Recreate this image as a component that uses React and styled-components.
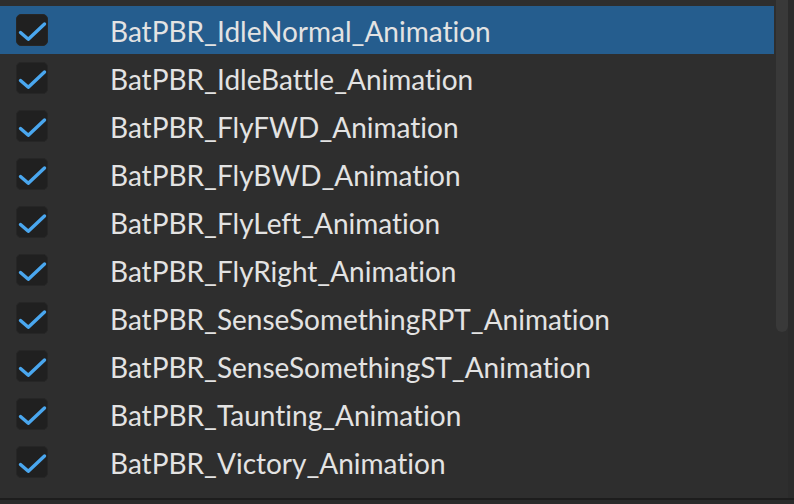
import React from "react";
import styled, { createGlobalStyle } from "styled-components";

const GlobalStyle = createGlobalStyle`
  html, body { margin: 0; padding: 0; background: #2e2e2e; }
  #root { height: 504px; }
`;

const Panel = styled.div`
  width: 794px;
  height: 504px;
  display: flex;
  flex-direction: column;
  background: #2e2e2e;
  overflow: hidden;
`;

const Body = styled.div`
  flex: 1;
  display: flex;
  min-height: 0;
`;

const List = styled.div`
  width: 774px;
  padding-top: 6px;
  display: flex;
  flex-direction: column;
`;

const Row = styled.div`
  height: 48px;
  display: flex;
  align-items: center;
  padding-left: 16px;
  gap: 62px;
  background: ${(p) => (p.$selected ? "#255d8e" : "transparent")};
`;

const Box = styled.div`
  width: 32px;
  height: 32px;
  flex: none;
  box-sizing: border-box;
  border-radius: 5px;
  background: #202020;
  border: 1px solid #262626;
  display: flex;
  align-items: center;
  justify-content: center;
`;

const Label = styled.span`
  font-family: "Lato", "Liberation Sans", sans-serif;
  font-size: 28px;
  line-height: 48px;
  color: #e3e3e3;
  font-variant-ligatures: none;
  white-space: nowrap;
  padding-top: 1px;
`;

const ScrollTrack = styled.div`
  width: 12px;
  margin-left: 2px;
`;

const Thumb = styled.div`
  width: 12px;
  height: 332px;
  background: #393939;
  border-radius: 0 0 6px 6px;
`;

const Edge = styled.div`
  width: 6px;
  background: #2b2b2b;
`;

const Footer = styled.div`
  height: 6px;
  flex: none;
  border-top: 2px solid #1d1d1d;
  box-sizing: border-box;
  background: #2a2a2a;
`;

const CheckIcon = styled.svg`
  display: block;
  flex: none;
`;

const Check = () => (
  <CheckIcon width="32" height="32" viewBox="0 0 32 32">
    <path
      d="M4.5 18.5 L12.3 25.3 L28.5 10"
      fill="none"
      stroke="#4aa7ef"
      strokeWidth="3.4"
      strokeLinecap="round"
      strokeLinejoin="round"
    />
  </CheckIcon>
);

const items = [
  "BatPBR_IdleNormal_Animation",
  "BatPBR_IdleBattle_Animation",
  "BatPBR_FlyFWD_Animation",
  "BatPBR_FlyBWD_Animation",
  "BatPBR_FlyLeft_Animation",
  "BatPBR_FlyRight_Animation",
  "BatPBR_SenseSomethingRPT_Animation",
  "BatPBR_SenseSomethingST_Animation",
  "BatPBR_Taunting_Animation",
  "BatPBR_Victory_Animation",
];

export default function App() {
  return (
    <>
      <GlobalStyle />
      <Panel>
        <Body>
          <List>
            {items.map((name, i) => (
              <Row key={name} $selected={i === 0}>
                <Box>
                  <Check />
                </Box>
                <Label>{name}</Label>
              </Row>
            ))}
          </List>
          <ScrollTrack>
            <Thumb />
          </ScrollTrack>
          <Edge />
        </Body>
        <Footer />
      </Panel>
    </>
  );
}
